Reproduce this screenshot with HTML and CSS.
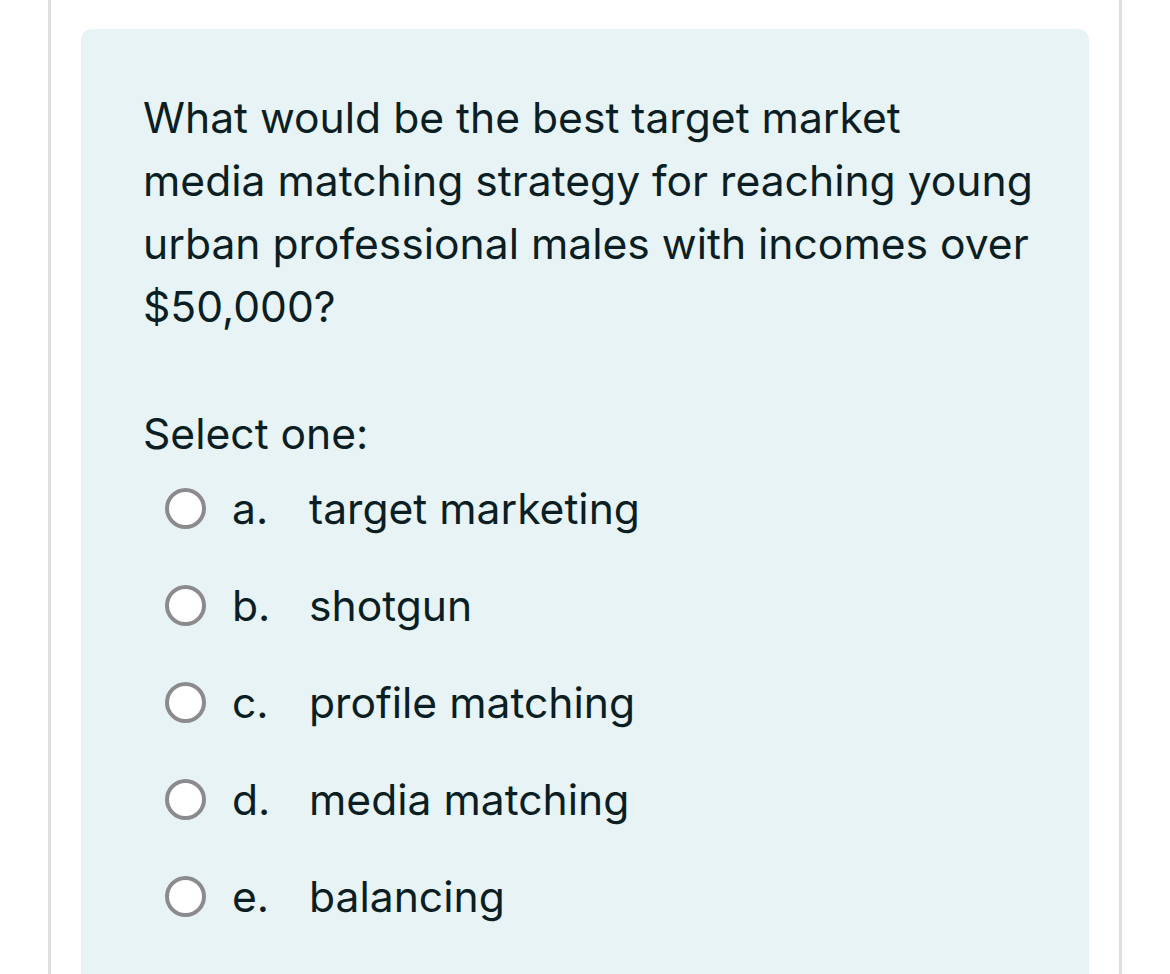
FILE: index.html
```html
<!DOCTYPE html>
<html>
<head>
<meta charset="utf-8">
<link rel="stylesheet" href="styles.css">
</head>
<body>
<div class="page">
  <div class="card">
    <p class="question">What would be the best target market<br>media matching strategy for reaching young<br>urban professional males with incomes over<br>$50,000?</p>
    <p class="prompt">Select one:</p>
    <ul class="options">
      <li class="option"><span class="radio"></span><span class="letter">a.</span><span class="label">target marketing</span></li>
      <li class="option"><span class="radio"></span><span class="letter">b.</span><span class="label">shotgun</span></li>
      <li class="option"><span class="radio"></span><span class="letter">c.</span><span class="label">profile matching</span></li>
      <li class="option"><span class="radio"></span><span class="letter">d.</span><span class="label">media matching</span></li>
      <li class="option"><span class="radio"></span><span class="letter">e.</span><span class="label">balancing</span></li>
    </ul>
  </div>
</div>
</body>
</html>
```
FILE: styles.css
```css
html, body {
  margin: 0;
  padding: 0;
  background: #ffffff;
  height: 100%;
  overflow: hidden;
}
body {
  font-family: Inter, "Noto Sans", sans-serif;
  color: #0b1e23;
}
.page {
  margin-left: 48px;
  width: 1074px;
  min-height: 974px;
  border-left: 3px solid #dedede;
  border-right: 3px solid #dedede;
  padding: 29px 30px 0;
  box-sizing: border-box;
}
.card {
  background: #e7f3f5;
  border-radius: 11px 11px 0 0;
  padding: 57px 30px 40px 62px;
  min-height: 945px;
  box-sizing: border-box;
}
.question {
  margin: 0;
  font-size: 42.6px;
  line-height: 63px;
  white-space: nowrap;
}
.prompt {
  margin: 64px 0 0;
  font-size: 42.6px;
  line-height: 63px;
}
.options {
  list-style: none;
  margin: -5px 0 0;
  padding: 0 0 0 22px;
}
.option {
  display: flex;
  align-items: center;
  height: 97px;
  font-size: 42.6px;
}
.radio {
  width: 33px;
  height: 33px;
  border: 4px solid #8b8b8e;
  border-radius: 50%;
  background: #ffffff;
  flex: none;
}
.letter {
  margin-left: 26px;
  width: 77px;
}
```
